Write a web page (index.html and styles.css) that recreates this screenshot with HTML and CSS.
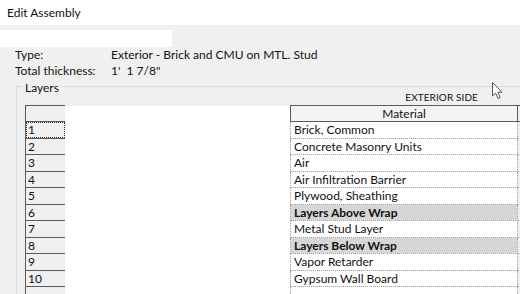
FILE: index.html
```html
<!DOCTYPE html>
<html>

<head>
    <meta charset="UTF-8">
    <meta name="viewport" content="width=device-width, initial-scale=1.0">
    <title>Edit Assembly</title>

    <link rel="stylesheet" href="styles.css">
</head>

<body>
    <div class="titlebar">Edit Assembly</div>

    <div class="panel">
        <div class="field"></div>

        <div class="props">
            <span>Type:</span>
            <span>Exterior - Brick and CMU on MTL. Stud</span>
            <span>Total thickness:</span>
            <span>1'&nbsp; 1 7/8"</span>
        </div>

        <div class="group">
            <div class="group-head">
                <span class="legend">Layers</span>
                <span class="side">EXTERIOR SIDE</span>
            </div>

            <table class="layers">
                <tr class="head">
                    <td class="num"></td>
                    <td class="blank" rowspan="12"></td>
                    <td class="mat">Material</td>
                    <td class="more"></td>
                </tr>
                <tr>
                    <td class="num focus">1</td>
                    <td class="mat">Brick, Common</td>
                    <td class="more"></td>
                </tr>
                <tr>
                    <td class="num">2</td>
                    <td class="mat">Concrete Masonry Units</td>
                    <td class="more"></td>
                </tr>
                <tr>
                    <td class="num">3</td>
                    <td class="mat">Air</td>
                    <td class="more"></td>
                </tr>
                <tr>
                    <td class="num">4</td>
                    <td class="mat">Air Infiltration Barrier</td>
                    <td class="more"></td>
                </tr>
                <tr>
                    <td class="num">5</td>
                    <td class="mat">Plywood, Sheathing</td>
                    <td class="more"></td>
                </tr>
                <tr class="wrap">
                    <td class="num">6</td>
                    <td class="mat">Layers Above Wrap</td>
                    <td class="more"></td>
                </tr>
                <tr>
                    <td class="num">7</td>
                    <td class="mat">Metal Stud Layer</td>
                    <td class="more"></td>
                </tr>
                <tr class="wrap">
                    <td class="num">8</td>
                    <td class="mat">Layers Below Wrap</td>
                    <td class="more"></td>
                </tr>
                <tr>
                    <td class="num">9</td>
                    <td class="mat">Vapor Retarder</td>
                    <td class="more"></td>
                </tr>
                <tr>
                    <td class="num">10</td>
                    <td class="mat">Gypsum Wall Board</td>
                    <td class="more"></td>
                </tr>
                <tr>
                    <td class="num"></td>
                    <td class="mat"></td>
                    <td class="more"></td>
                </tr>
            </table>
        </div>
    </div>

    <!-- mouse pointer -->
    <svg class="cursor" width="13" height="19" viewBox="0 0 13 19">
        <path d="M1.5 1.5 L1.5 15 L4.6 12 L7 17.5 L9.2 16.5 L6.9 11.2 L11 11.2 Z" fill="#fff" stroke="#555" stroke-width="1" stroke-linejoin="round"/>
    </svg>
</body>
</html>
```

FILE: styles.css
```css
* {
    margin: 0;
    padding: 0;
    box-sizing: border-box;
}
html, body {
    width: 520px;
    height: 294px;
    overflow: hidden;
}
body {
    font-family: Lato, "Liberation Sans", sans-serif;
    font-size: 12px;
    color: #111;
    background: #f0f0f0;
    position: relative;
}
.titlebar {
    height: 25px;
    line-height: 25px;
    padding-left: 7px;
    background: #fff;
}
.panel {
    background: #f0f0f0;
    padding-top: 5px;
}
.field {
    width: 172px;
    height: 17px;
    background: #fff;
}
.props {
    display: grid;
    grid-template-columns: 96px auto;
    padding-left: 15px;
    line-height: 16px;
}
.group {
    margin: 7px 0 0 16px;
    border-top: 1px solid #dcdcdc;
    border-left: 1px solid #dcdcdc;
    padding-left: 8px;
}
.group-head {
    display: flex;
    justify-content: space-between;
    align-items: flex-start;
    padding-right: 42px;
}
.legend {
    line-height: 16px;
    margin: -7px 0 0 -2px;
    padding: 0 2px;
    background: #f0f0f0;
}
.side {
    line-height: 16px;
    margin-top: 2px;
    font-size: 10px;
    letter-spacing: 0.1px;
}
.layers {
    border-collapse: collapse;
    table-layout: fixed;
    width: 500px;
}
.layers td {
    height: 16.5px;
    line-height: 15px;
    padding: 0 3px;
    white-space: nowrap;
    overflow: hidden;
}
.layers .head td {
    height: 16px;
}
.num {
    width: 39px;
    background: #f0f0f0;
    border-left: 1px solid #5a5a5a;
    border-bottom: 1px solid #5a5a5a;
    padding-left: 2px !important;
}
.head .num {
    border-top: 1px solid #5a5a5a;
}
.focus {
    outline: 1px dotted #333;
    outline-offset: -1px;
}
.blank {
    width: 226px;
    background: #fff;
    vertical-align: top;
}
.mat {
    width: 227px;
    background: #fff;
    border: 1px dotted #a0a0a0;
}
.head .mat {
    text-align: center;
    background: #f4f4f4;
    border: 1px solid #5a5a5a;
}
.wrap .mat {
    background: #d6d6d6;
    font-weight: 700;
}
.more {
    background: #f0f0f0;
    border: 1px dotted #a0a0a0;
}
.head .more {
    border: 1px solid #5a5a5a;
}
.cursor {
    position: absolute;
    left: 491px;
    top: 81px;
}
```
